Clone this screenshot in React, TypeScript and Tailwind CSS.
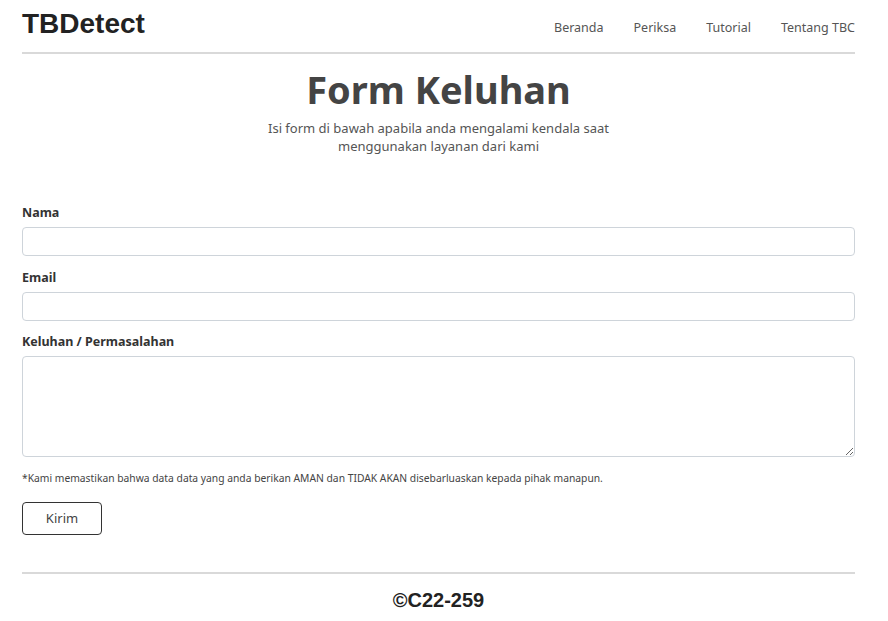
import { useState } from 'react';

const navLinks = ['Beranda', 'Periksa', 'Tutorial', 'Tentang TBC'];

export default function App() {
  const [nama, setNama] = useState('');
  const [email, setEmail] = useState('');
  const [keluhan, setKeluhan] = useState('');

  return (
    <div className="min-h-screen bg-white pl-[22px] pr-[33px] font-['Noto_Sans',sans-serif] text-[#444]">
      {/* Header */}
      <header className="flex items-center justify-between border-b-2 border-[#d9d9d9] h-[54px] pb-[4px]">
        <h1 className="font-['Liberation_Sans',Arial,sans-serif] text-[28px] font-bold text-[#222] leading-none">
          TBDetect
        </h1>
        <nav className="flex gap-[30px] pt-[8px]">
          {navLinks.map((link) => (
            <a key={link} href="#" className="text-[12.5px] text-[#555]">
              {link}
            </a>
          ))}
        </nav>
      </header>

      {/* Title */}
      <div className="flex flex-col items-center pt-[12px]">
        <h2 className="text-[38px] font-bold leading-[46px] text-[#444]">Form Keluhan</h2>
        <p className="mt-[7px] w-[370px] text-center text-[13px] leading-[18px] text-[#555]">
          Isi form di bawah apabila anda mengalami kendala saat menggunakan layanan dari kami
        </p>
      </div>

      {/* Form */}
      <form className="mt-[49px]" onSubmit={(e) => e.preventDefault()}>
        <label className="block text-[12.5px] font-bold text-[#333] leading-[18px]">Nama</label>
        <input
          value={nama}
          onChange={(e) => setNama(e.target.value)}
          className="mt-[5px] block w-full h-[29px] rounded-[4px] border border-[#ced4da] px-3 text-[13px]"
        />

        <label className="mt-[13px] block text-[12.5px] font-bold text-[#333] leading-[18px]">Email</label>
        <input
          value={email}
          onChange={(e) => setEmail(e.target.value)}
          className="mt-[5px] block w-full h-[29px] rounded-[4px] border border-[#ced4da] px-3 text-[13px]"
        />

        <label className="mt-[12px] block text-[12.5px] font-bold text-[#333] leading-[18px]">
          Keluhan / Permasalahan
        </label>
        <textarea
          value={keluhan}
          onChange={(e) => setKeluhan(e.target.value)}
          className="mt-[5px] block w-full h-[101px] rounded-[4px] border border-[#ced4da] px-3 py-2 text-[13px]"
        />

        <p className="mt-[14px] text-[10.3px] leading-[14px] text-[#444]">
          *Kami memastikan bahwa data data yang anda berikan AMAN dan TIDAK AKAN disebarluaskan kepada pihak manapun.
        </p>

        <button
          type="submit"
          className="mt-[17px] h-[33px] w-[80px] rounded-[4px] border border-[#333] bg-white text-[13px] text-[#444]"
        >
          Kirim
        </button>
      </form>

      {/* Footer */}
      <footer className="mt-[37px] border-t-2 border-[#d9d9d9] pt-[11px] pb-[10px] text-center">
        <span className="font-['Liberation_Sans',Arial,sans-serif] text-[20px] font-bold text-[#222]">©C22-259</span>
      </footer>
    </div>
  );
}
